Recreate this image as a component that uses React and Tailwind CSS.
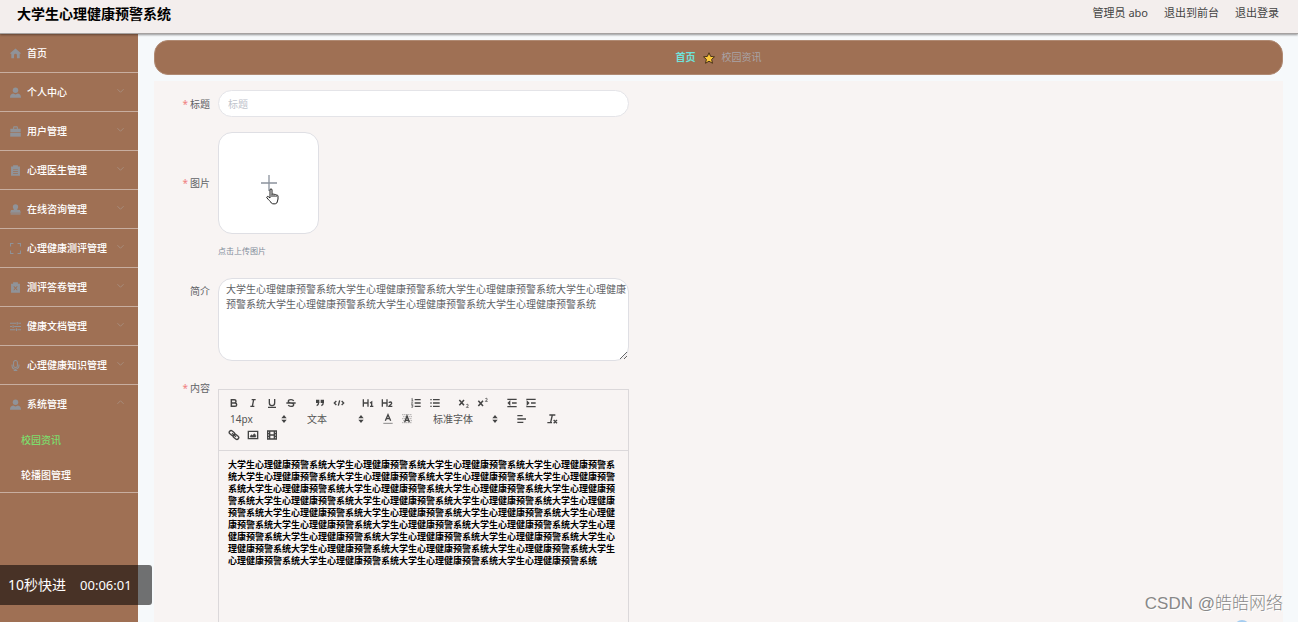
import React from "react";

const NAME = "大学生心理健康预警系统";

/* ---------- sidebar icons (16 x 16) ---------- */

const sideIcons = {
  home: <path d="M8 .8.4 7.400V8.400h1.500v6.600h4V10.500a2.100 2.100 0 0 1 4.200 0V15h4V8.400h1.500v-1z" />,
  user: (
    <>
      <circle cx="8" cy="4.600" r="4" />
      <path d="M0 15.600c0-3.600 1.600-5.600 4.600-6L8 10.800l3.400-1.200c3 .4 4.600 2.400 4.600 6z" />
    </>
  ),
  bag: (
    <>
      <path
        fillRule="evenodd"
        d="M4.500 4V2C4.500 1 5 .5 6 .5h4c1 0 1.500.5 1.500 1.500v2H15.500v5H.5V4zm1.500 0h4V2H6z"
      />
      <path d="M0.300 10h15.400v5.500H0.300z" />
    </>
  ),
  order: (
    <path
      fillRule="evenodd"
      d="M1.500 2h3V.5h7V2h3v13.500h-13zm3 4v1h7V6zm0 3v1h7V9zm0 3v1h7v-1z"
    />
  ),
  stamp: (
    <>
      <path d="M8 .5a3.900 3.900 0 0 1 3.900 3.900c0 1.700-1.400 2.600-1.400 4.400H14.500l1.300 3.800H.2L1.500 8.800h4c0-1.800-1.400-2.700-1.400-4.400A3.900 3.900 0 0 1 8 .5z" />
      <path d="M.8 13.600h14.400v1.700H.8z" />
    </>
  ),
  full: (
    <path
      fill="none"
      stroke="currentColor"
      strokeWidth="1.500"
      d="M.8 5V.8H5M11 .8h4.200V5M15.200 11v4.200H11M5 15.200H.8V11"
    />
  ),
  release: (
    <path
      fillRule="evenodd"
      d="M1.500 2.400h3V.5h7v1.900h3v13.100h-13zM4.800 6l2.200 3-2.200 3h1.500L8 9.900 9.700 12h1.500L9 9l2.200-3H9.700L8 8.100 6.300 6z"
    />
  ),
  sliders: (
    <path
      fill="none"
      stroke="currentColor"
      strokeWidth="1.500"
      d="M0 3.400h9M12 3.400h4M10.500 1.400v4M0 8h3M6 8h10M4.500 6v4M0 12.600h8M11 12.600h5M9.500 10.600v4"
    />
  ),
  mic: (
    <path
      fill="none"
      stroke="currentColor"
      strokeWidth="1.500"
      d="M8 .8a2.800 2.800 0 0 1 2.800 2.800v4.600a2.800 2.800 0 0 1-5.600 0V3.600A2.800 2.800 0 0 1 8 .8zM3 6.400v2a5 5 0 0 0 10 0v-2M8 13.400v2M5.400 15.400h5.200"
    />
  ),
};

const menu = [
  { icon: "home", text: "首页", leaf: true },
  { icon: "user", text: "个人中心" },
  { icon: "bag", text: "用户管理" },
  { icon: "order", text: "心理医生管理" },
  { icon: "stamp", text: "在线咨询管理" },
  { icon: "full", text: "心理健康测评管理" },
  { icon: "release", text: "测评答卷管理" },
  { icon: "sliders", text: "健康文档管理" },
  { icon: "mic", text: "心理健康知识管理" },
];

function MenuRow({ icon, text, leaf, open }) {
  return (
    <button type="button" className="flex h-[38px] w-full items-center pr-[14px] pl-[10px] text-left text-[10px] font-medium text-white">
      <svg viewBox="0 0 16 16" className="h-[11px] w-[11px] shrink-0 text-[#909399]" fill="currentColor">
        {sideIcons[icon]}
      </svg>
      <span className="ml-[6px] flex-1 whitespace-nowrap">{text}</span>
      {!leaf && (
        <svg viewBox="0 0 8 8" className="mb-[3px] h-[7px] w-[7px] shrink-0 text-[#a89080]" fill="none" stroke="currentColor">
          <path d={open ? "M.5 5.500 4 2l3.500 3.500" : "M.5 2.500 4 6l3.500-3.500"} />
        </svg>
      )}
    </button>
  );
}

/* ---------- editor toolbar ---------- */

const tools = {
  bold: <path strokeWidth="2.200" d="M5 4h4.500a2.500 2.500 0 0 1 0 5H5zM5 9h5.500a2.500 2.500 0 0 1 0 5H5z" />,
  italic: <path d="M7 4h6M5 14h6M8 14l2-10" />,
  underline: <path d="M5 3v6a4 4 0 0 0 8 0V3M3 15.500h12" />,
  strike: (
    <path d="M13 6c-.5-1.300-2.200-2-4-2-2.300 0-4 1-4 2.500S6.500 8.800 9 9s4 1 4 2.500S11.300 14 9 14c-1.800 0-3.500-.7-4-2M2 9h14" />
  ),
  quote: (
    <>
      <path fill="currentColor" d="M4 5h3v3H4zM11 5h3v3h-3z" />
      <path d="M7 8c0 4-3 5-3 5M14 8c0 4-3 5-3 5" />
    </>
  ),
  code: <path d="M5 6 2 9l3 3M13 6l3 3-3 3M10 5 8 13" />,
  h1: <path d="M2 3.500v11M9 3.500v11M2 9h7M12 9l2.500-1.500v6.500M12 14h5" />,
  h2: <path d="M2 3.500v11M9 3.500v11M2 9h7M12 9c.3-2 4-2 4 .3 0 1.700-3 2.700-4 4.700h5" />,
  ordered: (
    <>
      <path d="M7 4h9M7 9h9M7 14h9" />
      <path strokeWidth="1" d="M2 3l1.500-.8V6M2 6h3M2 8.200c2-1 3 .2 0 2.600h3M2 12.400h2.500L3.200 14c2.500 0 1.500 2.200-1.200 1.500" />
    </>
  ),
  bullet: <path d="M6 4h10M6 9h10M6 14h10M2 4h2M2 9h2M2 14h2" />,
  sub: (
    <>
      <path strokeWidth="2.300" d="M2 4.500l7 8M9 4.500l-7 8" />
      <path strokeWidth="1.200" d="M12.500 12c.4-1.500 3-1.300 3 .2 0 1.200-2.200 1.800-3 3.300h3.500" />
    </>
  ),
  sup: (
    <>
      <path strokeWidth="2.300" d="M2 5.500l7 8M9 5.500l-7 8" />
      <path strokeWidth="1.200" d="M12.500 3c.4-1.500 3-1.300 3 .2 0 1.200-2.200 1.800-3 3.300h3.500" />
    </>
  ),
  outdent: <path d="M2 3.500h14M9 9h7M2 14.500h14M5.500 7 3.500 9l2 2z" />,
  indent: <path d="M2 3.500h14M9 9h7M2 14.500h14M3.500 7l2 2-2 2z" />,
  color: (
    <>
      <path d="M5 11.500 9 2.500l4 9M6.500 8.500h5" />
      <path strokeWidth="1.500" className="opacity-60" d="M2 15.500h14" />
    </>
  ),
  background: (
    <>
      <path
        strokeWidth="1.500"
        strokeDasharray="1.500 1.500"
        className="opacity-60"
        d="M2 2.500h14M3.500 5.500h13M2 8.500h14M3.500 11.500h13M2 14.500h14"
      />
      <path d="M5.500 14 9 4.500l3.500 9.500M7 11h4" />
    </>
  ),
  align: <path d="M2 4h8M2 9h13M2 14h9" />,
  clean: <path d="M5 3h9M9.500 3 7 14M2 14.500h7M11.500 10.500l5 5M16.500 10.500l-5 5" />,
  link: (
    <>
      <rect x="1.500" y="3.500" width="9" height="5.500" rx="2.700" transform="rotate(40 6 6.250)" />
      <rect x="7.500" y="9" width="9" height="5.500" rx="2.700" transform="rotate(40 12 11.750)" />
      <path d="M6 6.500l6 5" />
    </>
  ),
  image: (
    <>
      <path d="M2 3.500h14v11H2z" />
      <path fill="currentColor" strokeWidth="1" d="M5 12V10.500l2-2 1.500 1.500L11 7l2 2.500V12z" />
    </>
  ),
  video: <path d="M2.500 3h13v12h-13zM5.500 3v12M12.500 3v12M5.500 9h7M2.500 7h3M2.500 11h3M12.500 7h3M12.500 11h3" />,
};

function Tool({ name, label }) {
  return (
    <button type="button" aria-label={label} className="flex h-4 w-[19px] shrink-0 items-center justify-center text-[#444]">
      <svg viewBox="0 0 18 18" className="h-3 w-3" fill="none" stroke="currentColor" strokeWidth="2">
        {tools[name]}
      </svg>
    </button>
  );
}

function Group({ items }) {
  return (
    <div className="flex">
      {items.map(([name, label]) => (
        <Tool key={name} name={name} label={label} />
      ))}
    </div>
  );
}

function Picker({ label, value, wide }) {
  return (
    <div className={wide ? "relative w-[74px]" : "relative w-[66px]"}>
      <select
        aria-label={label}
        className="block h-4 w-full appearance-none bg-transparent pl-[6px] text-[10px] leading-4 text-[#555] outline-none"
      >
        <option>{value}</option>
      </select>
      <svg viewBox="0 0 8 12" className="pointer-events-none absolute top-1 right-[3px] h-2 w-[6px]" fill="#444">
        <path d="M4 0l4 5H0zM4 12 0 7h8z" />
      </svg>
    </div>
  );
}

/* ---------- form ---------- */

function Label({ htmlFor, required, children, className }) {
  return (
    <label htmlFor={htmlFor} className={`w-14 shrink-0 text-right text-[10px] leading-[26px] text-[#606266] ${className || ""}`}>
      {required && <span className="mr-[2px] text-[#f08080]">*</span>}
      {children}
    </label>
  );
}

export default function App() {
  return (
    <div className="relative flex min-h-screen flex-col bg-[#f6f9fb] font-['Noto_Sans','Noto_Sans_CJK_SC',sans-serif]">
      <header className="relative z-10 flex h-[34px] items-start justify-between border-b border-[#a5a1a0] bg-[#f3eeed] pr-[19px] pl-[17px] shadow-[0_1px_2px_rgba(0,0,0,0.4)]">
        <h1 className="text-[14px] leading-7 font-bold text-black">{NAME}</h1>
        <nav className="flex gap-4 text-[11px] leading-[26px] text-[#444]">
          <span>管理员 abo</span>
          <a href="#front">退出到前台</a>
          <a href="#logout">退出登录</a>
        </nav>
      </header>

      <div className="flex flex-1">
        <aside className="w-[138px] shrink-0 bg-[#9f7054]">
          <ul>
            {menu.map((m) => (
              <li key={m.text} className="border-b border-[#c8aea0]">
                <MenuRow {...m} />
              </li>
            ))}
            <li className="border-b border-[#c8aea0] text-[10px] font-medium">
              <MenuRow icon="user" text="系统管理" open />
              <a href="#news" className="flex h-[35px] items-center pl-[21px] text-[#7ddc6c]">校园资讯</a>
              <a href="#banner" className="flex h-[34px] items-center pl-[21px] text-white">轮播图管理</a>
            </li>
          </ul>
        </aside>

        <main className="flex min-w-0 flex-1 flex-col pt-[6px] pr-[15px] pl-4">
          <nav className="flex h-[35px] shrink-0 items-center justify-center gap-[7px] rounded-[14px] border border-[#b08a73] bg-[#9f7054] text-[10px]">
            <a href="#home" className="font-bold text-[#6fe3dc]">首页</a>
            <svg viewBox="0 0 24 24" className="h-3 w-3" fill="#fdc93a" stroke="#493219" strokeWidth="2" strokeLinejoin="round">
              <path d="M12 1.500l3.300 7.300 7.700.8-5.800 5.200 1.800 7.700-7-4.100-7 4.100 1.800-7.700L1 9.600l7.700-.8z" />
            </svg>
            <span className="text-[#a9a3a6]">校园资讯</span>
          </nav>

          <form className="mt-[6px] flex flex-1 flex-col bg-[#f8f4f3] pt-[9px]">
            <div className="flex items-center gap-2">
              <Label htmlFor="title" required>标题</Label>
              <input
                id="title"
                placeholder="标题"
                className="h-[27px] w-full max-w-[411px] rounded-full border border-[#e4e4e8] bg-white px-[9px] text-[10px] outline-none placeholder:text-[#c0c4cc]"
              />
            </div>

            <div className="mt-[15px] flex gap-2">
              <Label htmlFor="picture" required className="mt-[38px]">图片</Label>
              <div>
                <button
                  id="picture"
                  type="button"
                  aria-label="上传图片"
                  className="relative flex h-[102px] w-[101px] items-center justify-center rounded-[14px] border border-[#dfdfe4] bg-white"
                >
                  <svg viewBox="0 0 16 16" className="h-4 w-4" stroke="#8c939d" strokeWidth="1.300">
                    <path d="M8 0v16M0 8h16" />
                  </svg>
                  <svg viewBox="0 0 13 17" className="absolute top-[55px] left-[47px] h-[17px] w-[13px]" fill="#fff" stroke="#222" strokeLinejoin="round">
                    <path d="M4 10V2c0-1.600 2-1.600 2 0v4.500c.3-1 1.900-.8 2 .3.400-.8 1.800-.6 2 .5.500-.6 1.800-.4 2 .7V11c0 1.700-.9 2.300-1.200 4-.9 1.200-4.600 1.200-5.500 0C4.600 13.300 2.500 12 .8 9.700c-.3-1.200 1-1.600 1.800-.9z" />
                    <path d="M6 6.500V9M8 7v2M10 7.500V9" />
                  </svg>
                </button>
                <p className="mt-[11px] text-[8px] leading-3 text-[#7f8b99]">点击上传图片</p>
              </div>
            </div>

            <div className="mt-[21px] flex gap-2">
              <Label htmlFor="intro">简介</Label>
              <textarea
                id="intro"
                className="h-[83px] w-full max-w-[411px] resize overflow-hidden rounded-[14px] border border-[#dfdfe4] bg-white py-[3px] pl-[7px] text-[10px] leading-[15px] text-[#606266] outline-none"
                defaultValue={NAME.repeat(7)}
              />
            </div>

            <div className="mt-[14px] flex flex-1 gap-2">
              <Label htmlFor="content" required>内容</Label>
              <div className="mt-[14px] flex w-full max-w-[411px] flex-col border border-b-0 border-[#dbd8da]">
                <div className="border-b border-[#dbd8da] px-[5px] pt-[5px] pb-[7px]">
                  <div className="flex gap-[10px]">
                    <Group items={[["bold", "加粗"], ["italic", "斜体"], ["underline", "下划线"], ["strike", "删除线"]]} />
                    <Group items={[["quote", "引用"], ["code", "代码"]]} />
                    <Group items={[["h1", "标题一"], ["h2", "标题二"]]} />
                    <Group items={[["ordered", "有序列表"], ["bullet", "无序列表"]]} />
                    <Group items={[["sub", "下标"], ["sup", "上标"]]} />
                    <Group items={[["outdent", "减少缩进"], ["indent", "增加缩进"]]} />
                  </div>
                  <div className="flex gap-[11px]">
                    <Picker label="字号" value="14px" />
                    <Picker label="段落" value="文本" />
                    <Group items={[["color", "文字颜色"], ["background", "背景颜色"]]} />
                    <Picker label="字体" value="标准字体" wide />
                    <Group items={[["align", "对齐"]]} />
                    <Group items={[["clean", "清除格式"]]} />
                  </div>
                  <Group items={[["link", "链接"], ["image", "图片"], ["video", "视频"]]} />
                </div>
                <textarea
                  id="content"
                  className="w-full flex-1 resize-none overflow-hidden bg-transparent px-[9px] py-2 text-[9px] leading-3 font-bold text-black outline-none"
                  defaultValue={NAME.repeat(35)}
                />
              </div>
            </div>
          </form>
        </main>
      </div>

      <div className="absolute bottom-[17px] left-0 z-20 flex h-10 w-[152px] items-center rounded-r-[3px] bg-black/55 pl-2 whitespace-nowrap text-white">
        <p className="flex items-baseline gap-[14px] text-[14px]">
          <span>10秒快进</span>
          <span className="text-[13px]">00:06:01</span>
        </p>
      </div>

      <div className="pointer-events-none absolute right-[15px] bottom-0 z-20 h-8 overflow-hidden">
        <p className="font-['Liberation_Sans','Noto_Sans_CJK_SC',sans-serif] text-[17px] leading-7 font-light text-[#888] [text-shadow:1px_1px_0_#fff]">
          CSDN @皓皓网络
        </p>
        <span className="absolute top-[30px] right-[33px] h-4 w-4 rounded-full bg-[#a5cdf0]" />
      </div>
    </div>
  );
}
